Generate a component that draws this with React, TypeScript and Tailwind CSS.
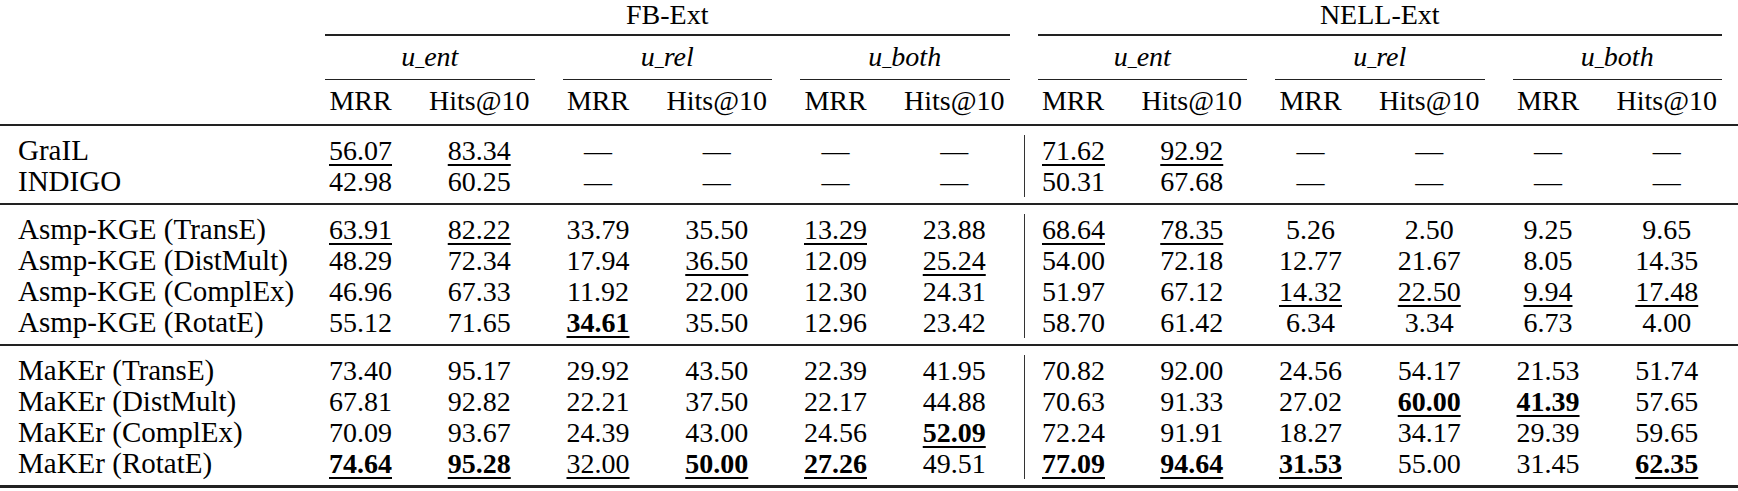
const GRID =
  "grid grid-cols-[311px_99px_138.5px_99px_138.5px_99px_138.5px_99px_138.5px_99px_138.5px_99px_138.5px]";

const D = "\u2014";

type Row = { name: string; cells: string[] };

const topBlock: Row[] = [
  { name: "GraIL", cells: ["_56.07", "_83.34", D, D, D, D, "_71.62", "_92.92", D, D, D, D] },
  { name: "INDIGO", cells: ["42.98", "60.25", D, D, D, D, "50.31", "67.68", D, D, D, D] },
];

const asmpBlock: Row[] = [
  { name: "Asmp-KGE (TransE)", cells: ["_63.91", "_82.22", "33.79", "35.50", "_13.29", "23.88", "_68.64", "_78.35", "5.26", "2.50", "9.25", "9.65"] },
  { name: "Asmp-KGE (DistMult)", cells: ["48.29", "72.34", "17.94", "_36.50", "12.09", "_25.24", "54.00", "72.18", "12.77", "21.67", "8.05", "14.35"] },
  { name: "Asmp-KGE (ComplEx)", cells: ["46.96", "67.33", "11.92", "22.00", "12.30", "24.31", "51.97", "67.12", "_14.32", "_22.50", "_9.94", "_17.48"] },
  { name: "Asmp-KGE (RotatE)", cells: ["55.12", "71.65", "**34.61", "35.50", "12.96", "23.42", "58.70", "61.42", "6.34", "3.34", "6.73", "4.00"] },
];

const makerBlock: Row[] = [
  { name: "MaKEr (TransE)", cells: ["73.40", "95.17", "29.92", "43.50", "22.39", "41.95", "70.82", "92.00", "24.56", "54.17", "21.53", "51.74"] },
  { name: "MaKEr (DistMult)", cells: ["67.81", "92.82", "22.21", "37.50", "22.17", "44.88", "70.63", "91.33", "27.02", "**60.00", "**41.39", "57.65"] },
  { name: "MaKEr (ComplEx)", cells: ["70.09", "93.67", "24.39", "43.00", "24.56", "**52.09", "72.24", "91.91", "18.27", "34.17", "29.39", "59.65"] },
  { name: "MaKEr (RotatE)", cells: ["**74.64", "**95.28", "_32.00", "**50.00", "**27.26", "49.51", "**77.09", "**94.64", "**31.53", "55.00", "31.45", "**62.35"] },
];

function Value({ raw }: { raw: string }) {
  if (raw.startsWith("**")) {
    return (
      <span className="font-bold underline decoration-[1.5px] underline-offset-[4px]">{raw.slice(2)}</span>
    );
  }
  if (raw.startsWith("_")) {
    return <span className="underline decoration-[1.5px] underline-offset-[4px]">{raw.slice(1)}</span>;
  }
  return <span>{raw}</span>;
}

function Block({ rows }: { rows: Row[] }) {
  return (
    <div className="pt-[9px] pb-[6px]">
      {rows.map((r) => (
        <div key={r.name} className={`${GRID} h-[31px] leading-[31px]`}>
          <div className="pl-[18px] whitespace-nowrap text-[29px]">{r.name}</div>
          {r.cells.map((c, i) => (
            <div
              key={i}
              className={i === 6 ? "text-center border-l border-[#333]" : "text-center"}
            >
              <Value raw={c} />
            </div>
          ))}
        </div>
      ))}
    </div>
  );
}

// setting names, split at the underscore (drawn short, as LaTeX does)
const groups = ["ent", "rel", "both", "ent", "rel", "both"];

export default function App() {
  return (
    <div className="w-[1738px] h-[491px] bg-white text-black overflow-hidden font-['Liberation_Serif',serif] text-[28px]">
      {/* dataset headers */}
      <div className={`${GRID} h-[30px] leading-[30px]`}>
        <div />
        <div className="col-span-6 text-center">FB-Ext</div>
        <div className="col-span-6 text-center">NELL-Ext</div>
      </div>
      <div className={`${GRID} mt-[4px]`}>
        <div />
        <div className="col-span-6 mx-[14px] h-[1.5px] bg-[#222]" />
        <div className="col-span-6 mx-[14px] h-[1.5px] bg-[#222]" />
      </div>

      {/* setting headers */}
      <div className={`${GRID} mt-[6px] h-[30px] leading-[30px]`}>
        <div />
        {groups.map((g, i) => (
          <div key={i} className="col-span-2 text-center italic">
            u<span className="text-[18px]">_</span>
            {g}
          </div>
        ))}
      </div>
      <div className={`${GRID} mt-[7px]`}>
        <div />
        {groups.map((_, i) => (
          <div key={i} className="col-span-2 mx-[14px] h-[1.5px] bg-[#222]" />
        ))}
      </div>

      {/* metric headers */}
      <div className={`${GRID} mt-[6px] h-[30px] leading-[30px]`}>
        <div />
        {groups.map((_, i) => [
          <div key={`m${i}`} className="text-center">MRR</div>,
          <div key={`h${i}`} className="text-center">Hits@10</div>,
        ])}
      </div>

      <div className="mt-[8px] h-[2px] bg-[#222]" />
      <Block rows={topBlock} />
      <div className="h-[2px] bg-[#222]" />
      <Block rows={asmpBlock} />
      <div className="h-[2px] bg-[#222]" />
      <Block rows={makerBlock} />
      <div className="h-[3px] bg-[#222]" />
    </div>
  );
}
